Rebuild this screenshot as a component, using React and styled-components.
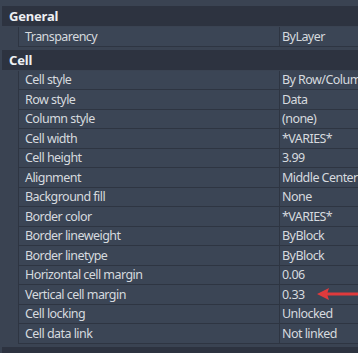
import styled, { createGlobalStyle } from "styled-components";

const GlobalStyle = createGlobalStyle`
  html, body {
    margin: 0;
    padding: 0;
    background: #3a4352;
    overflow: hidden;
  }
  * { box-sizing: border-box; }
`;

const sections = [
  {
    id: "general",
    title: "General",
    rows: [["Transparency", "ByLayer"]],
  },
  {
    id: "cell",
    title: "Cell",
    rows: [
      ["Cell style", "By Row/Column"],
      ["Row style", "Data"],
      ["Column style", "(none)"],
      ["Cell width", "*VARIES*"],
      ["Cell height", "3.99"],
      ["Alignment", "Middle Center"],
      ["Background fill", "None"],
      ["Border color", "*VARIES*"],
      ["Border lineweight", "ByBlock"],
      ["Border linetype", "ByBlock"],
      ["Horizontal cell margin", "0.06"],
      ["Vertical cell margin", "0.33", true],
      ["Cell locking", "Unlocked"],
      ["Cell data link", "Not linked"],
    ],
  },
  // next section header, only its top edge is visible
  { id: "content", title: "", rows: [] },
];

function Arrow() {
  return (
    <ArrowSvg width="42" height="13" viewBox="0 0 42 13">
      <rect x="9" y="5" width="33" height="3" fill="#e03a3c" />
      <path d="M0 6.5 L12 0.5 L10 6.5 L12 12.5 Z" fill="#e03a3c" />
    </ArrowSvg>
  );
}

export default function App() {
  return (
    <>
      <GlobalStyle />
      <Panel>
        {sections.map((section) => (
          <Section key={section.id}>
            <Header>{section.title}</Header>
            {section.rows.length > 0 && (
              <RowList>
                {section.rows.map(([name, value, marked]) => (
                  <Row key={name}>
                    <NameCell>{name}</NameCell>
                    <ValueCell>
                      {value}
                      {marked && <Arrow />}
                    </ValueCell>
                  </Row>
                ))}
              </RowList>
            )}
          </Section>
        ))}
      </Panel>
    </>
  );
}

const Panel = styled.div`
  width: 358px;
  height: 353px;
  padding-top: 6px;
  display: flex;
  flex-direction: column;
  gap: 3px;
  font-family: "Segoe UI", "Noto Sans", sans-serif;
  overflow: hidden;
  user-select: none;
`;

const Section = styled.section`
  display: flex;
  flex-direction: column;
  gap: 1px;
`;

const Header = styled.div`
  margin-left: 2px;
  height: 20px;
  padding-left: 7px;
  display: flex;
  align-items: center;
  background: #2d3340;
  color: #eef0f3;
  font-weight: 700;
  font-size: 13px;
  letter-spacing: -0.2px;
`;

const RowList = styled.div`
  margin-left: 18px;
  border-left: 1px solid #2e3542;
  display: flex;
  flex-direction: column;
`;

const Row = styled.div`
  height: 19.5px;
  display: grid;
  grid-template-columns: 260px 1fr;
  column-gap: 1px;
  background: #2e3542;
  border-bottom: 1px solid #2e3542;
`;

const Cell = styled.div`
  background: #3b4555;
  color: #d6dadf;
  font-size: 12.5px;
  letter-spacing: -0.55px;
  display: flex;
  align-items: center;
  white-space: nowrap;
  overflow: hidden;
`;

const NameCell = styled(Cell)`
  padding-left: 6px;
`;

const ValueCell = styled(Cell)`
  position: relative;
  padding-left: 2px;
`;

const ArrowSvg = styled.svg`
  position: absolute;
  left: 37px;
  top: 50%;
  transform: translateY(-50%);
`;
